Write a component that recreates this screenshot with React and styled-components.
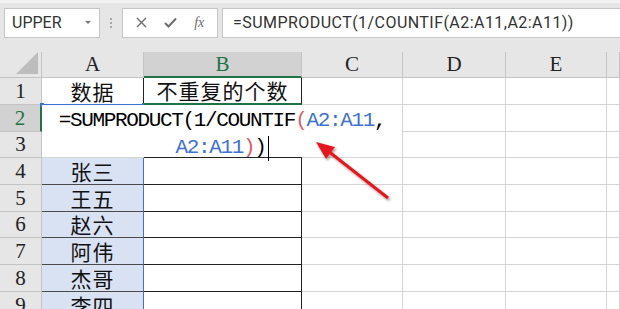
import { createGlobalStyle, styled } from "styled-components";

const GlobalStyle = createGlobalStyle`
  body {
    margin: 0;
    background: #ffffff;
    font-family: "Liberation Sans", Arial, sans-serif;
  }
`;

const green = "#217346";
const rangeBlue = "#3d72d4";
const grid = "#d4d4d4";
const headLine = "#c4c4c4";

const Page = styled.div`
  position: relative;
  width: 620px;
  height: 309px;
  overflow: hidden;
  background: #e6e6e6;
`;

const Toolbar = styled.div`
  display: flex;
  align-items: center;
  height: 52px;
  padding: 0 0 10px 4px;
  box-sizing: border-box;
  border-top: 3px solid #f2f2f2;
`;

const NameBox = styled.div`
  display: flex;
  align-items: center;
  justify-content: space-between;
  width: 96px;
  height: 30px;
  box-sizing: border-box;
  padding: 0 8px 0 7px;
  background: #fff;
  border: 1px solid #c6c6c6;
  font-family: Roboto, sans-serif;
  font-size: 16px;
  color: #333;
`;

const Caret = styled.span`
  width: 0;
  height: 0;
  border-left: 3px solid transparent;
  border-right: 3px solid transparent;
  border-top: 3px solid #777;
`;

const Grip = styled.div`
  display: flex;
  flex-direction: column;
  gap: 2px;
  width: 22px;
  align-items: center;
  span {
    width: 2px;
    height: 2px;
    background: #a8a8a8;
  }
`;

const IconBox = styled.div`
  display: flex;
  align-items: center;
  justify-content: space-around;
  width: 96px;
  height: 30px;
  box-sizing: border-box;
  padding: 0 4px;
  background: #fff;
  border: 1px solid #c6c6c6;
  margin-right: 4px;
  color: #6e6e6e;
`;

const Fx = styled.span`
  font-family: "Liberation Serif", serif;
  font-style: italic;
  font-size: 14px;
  color: #6e6e6e;
`;

const FormulaBox = styled.div`
  flex: 1;
  height: 30px;
  box-sizing: border-box;
  display: flex;
  align-items: center;
  padding-left: 10px;
  background: #fff;
  border: 1px solid #c6c6c6;
  border-right: none;
  font-family: Roboto, sans-serif;
  font-size: 16px;
  letter-spacing: 0.45px;
  color: #333;
  white-space: nowrap;
`;

const Sheet = styled.div`
  display: grid;
  grid-template-columns: 42px 102px 158px 101px 103px 101px 1fr;
  grid-template-rows: 26px 27px 27px 26px 27px 27px 26px 27px 27px 27px;
  background: #fff;
`;

const Corner = styled.div`
  grid-row: 1;
  grid-column: 1;
  position: relative;
  background: #e6e6e6;
  border-right: 1px solid ${headLine};
  border-bottom: 1px solid ${headLine};
  &::after {
    content: "";
    position: absolute;
    right: 3px;
    bottom: 3px;
    border-left: 22px solid transparent;
    border-bottom: 22px solid #bdbdbd;
  }
`;

const ColHead = styled.div`
  grid-row: 1;
  grid-column: ${(p) => p.$col + 2};
  display: flex;
  align-items: center;
  justify-content: center;
  background: ${(p) => (p.$active ? "#d2d2d2" : "#e6e6e6")};
  color: ${(p) => (p.$active ? green : "#222")};
  border-right: 1px solid ${headLine};
  border-bottom: ${(p) => (p.$active ? `2px solid ${green}` : `1px solid ${headLine}`)};
  font-family: "Liberation Serif", serif;
  font-size: 21px;
  line-height: 1;
`;

const RowHead = styled.div`
  grid-column: 1;
  grid-row: ${(p) => p.$row + 1};
  display: flex;
  align-items: center;
  justify-content: center;
  background: ${(p) => (p.$active ? "#d2d2d2" : "#e6e6e6")};
  color: ${(p) => (p.$active ? green : "#222")};
  border-right: ${(p) => (p.$active ? `2px solid ${green}` : `1px solid ${headLine}`)};
  border-bottom: 1px solid ${headLine};
  font-family: "Liberation Serif", serif;
  font-size: 21px;
  line-height: 1;
  overflow: hidden;
`;

const Cell = styled.div`
  grid-row: ${(p) => p.$row + 1};
  grid-column: ${(p) => p.$col + 2};
  position: relative;
  display: flex;
  align-items: center;
  justify-content: center;
  background: ${(p) => p.$fill || "#fff"};
  border-right: 1px solid ${(p) => p.$right || grid};
  border-bottom: ${(p) => p.$bottomW || 1}px solid ${(p) => p.$bottom || grid};
  font-family: "Noto Sans CJK SC", sans-serif;
  font-size: 21px;
  line-height: 1;
  color: #111;
  letter-spacing: 1px;
  white-space: nowrap;
  &::before,
  &::after {
    content: "";
    display: ${(p) => (p.$handles ? "block" : "none")};
    position: absolute;
    bottom: -3px;
    width: 4px;
    height: 4px;
    background: ${rangeBlue};
  }
  &::before {
    left: -2px;
  }
  &::after {
    right: -3px;
  }
`;

const Editor = styled.div`
  grid-column: 2 / 5;
  grid-row: 3 / 5;
  margin: 0 1px 1px 0;
  background: #fff;
  z-index: 1;
  display: flex;
  flex-direction: column;
  align-items: center;
  padding-top: 2px;
  font-family: "Liberation Mono", monospace;
  font-size: 21px;
  letter-spacing: -1.35px;
  color: #000;
  white-space: pre;
`;

const Line = styled.div`
  height: 27px;
  line-height: 27px;
  display: flex;
  align-items: center;
`;

const Ref = styled.span`
  color: ${rangeBlue};
`;

const Paren = styled.span`
  color: #e05a6a;
`;

const Cursor = styled.span`
  display: inline-block;
  width: 0;
  height: 25px;
  border-left: 1px solid #000;
  margin-left: 2px;
  align-self: flex-end;
`;

const Arrow = styled.svg`
  position: absolute;
  left: 0;
  top: 0;
  pointer-events: none;
  z-index: 5;
`;

const cols = ["A", "B", "C", "D", "E", ""];
const names = ["张三", "王五", "赵六", "阿伟", "杰哥", "李四"];

function rowCells(r) {
  const out = [];
  for (let c = 0; c < 6; c++) {
    const key = `${r}-${c}`;
    const pos = { $row: r, $col: c };
    if (r === 1 && c === 0) {
      out.push(
        <Cell key={key} {...pos} $right="#222" $bottom={rangeBlue} $handles>
          数据
        </Cell>
      );
    } else if (r === 1 && c === 1) {
      out.push(
        <Cell key={key} {...pos} $right="#222" $bottom={green} $bottomW={2}>
          不重复的个数
        </Cell>
      );
    } else if (r >= 4 && c === 0) {
      out.push(
        <Cell key={key} {...pos} $fill="#d9e2f3" $right={rangeBlue} $bottom="#4a4a4a">
          {names[r - 4]}
        </Cell>
      );
    } else if (r >= 3 && c === 1) {
      out.push(<Cell key={key} {...pos} $right="#222" $bottom="#222" />);
    } else {
      out.push(<Cell key={key} {...pos} />);
    }
  }
  return out;
}

export default function App() {
  return (
    <Page>
      <GlobalStyle />
      <Toolbar>
        <NameBox>
          UPPER
          <Caret />
        </NameBox>
        <Grip>
          <span />
          <span />
          <span />
        </Grip>
        <IconBox>
          <svg width="11" height="11" viewBox="0 0 11 11">
            <path d="M1 1 L10 10 M10 1 L1 10" stroke="#6e6e6e" strokeWidth="1.4" />
          </svg>
          <svg width="13" height="11" viewBox="0 0 13 11">
            <path d="M1 6 L4.5 9.5 L12 1.5" stroke="#6e6e6e" strokeWidth="2" fill="none" />
          </svg>
          <Fx>fx</Fx>
        </IconBox>
        <FormulaBox>=SUMPRODUCT(1/COUNTIF(A2:A11,A2:A11))</FormulaBox>
      </Toolbar>

      <Sheet>
        <Corner />
        {cols.map((c, i) => (
          <ColHead key={"c" + i} $col={i} $active={c === "B"}>
            {c}
          </ColHead>
        ))}
        {[1, 2, 3, 4, 5, 6, 7, 8, 9].map((r) => [
          <RowHead key={"h" + r} $row={r} $active={r === 2}>
            {r}
          </RowHead>,
          ...rowCells(r),
        ])}
        <Editor>
          <Line>
            =SUMPRODUCT(1/COUNTIF<Paren>(</Paren>
            <Ref>A2:A11</Ref>,
          </Line>
          <Line>
            <Ref>A2:A11</Ref>
            <Paren>)</Paren>)<Cursor />
          </Line>
        </Editor>
      </Sheet>

      <Arrow width="620" height="309" viewBox="0 0 620 309">
        <defs>
          <filter id="sh" x="-20%" y="-20%" width="140%" height="140%">
            <feDropShadow dx="1.5" dy="2" stdDeviation="1.2" floodColor="#000" floodOpacity="0.35" />
          </filter>
        </defs>
        <g filter="url(#sh)">
          <line x1="388" y1="198" x2="330" y2="152.5" stroke="#e8161b" strokeWidth="3" />
          <polygon points="316,142 335,147 326,159" fill="#e8161b" />
        </g>
      </Arrow>
    </Page>
  );
}
